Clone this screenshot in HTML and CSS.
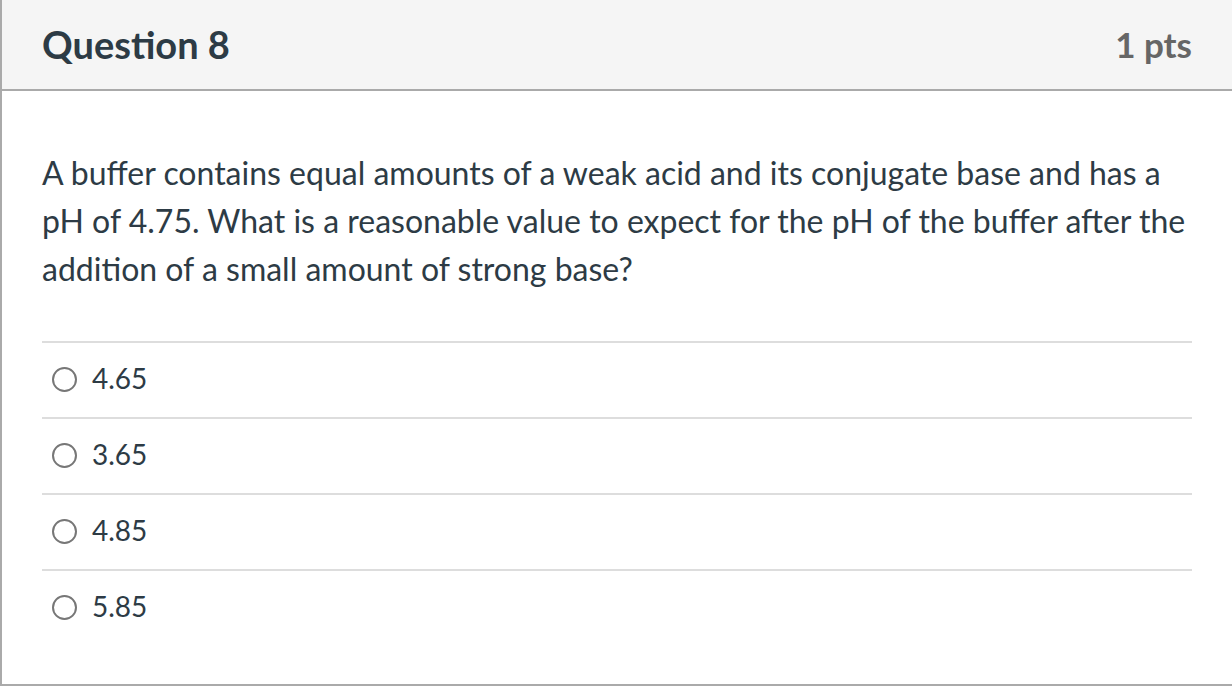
FILE: index.html
```html
<!DOCTYPE html>
<html lang="en">
<head>
<meta charset="utf-8">
<title>Question 8</title>
<link rel="stylesheet" href="styles.css">
</head>
<body>
<div class="question">
  <div class="q-header">
    <h2 class="q-title">Question 8</h2>
    <div class="q-points">1 pts</div>
  </div>
  <div class="q-body">
    <p class="q-text">A buffer contains equal amounts of a weak acid and its conjugate base and has a pH of 4.75. What is a reasonable value to expect for the pH of the buffer after the addition of a small amount of strong base?</p>
    <div class="answers">
      <label class="answer"><span class="radio"></span><span class="answer-text">4.65</span></label>
      <label class="answer"><span class="radio"></span><span class="answer-text">3.65</span></label>
      <label class="answer"><span class="radio"></span><span class="answer-text">4.85</span></label>
      <label class="answer"><span class="radio"></span><span class="answer-text">5.85</span></label>
    </div>
  </div>
</div>
</body>
</html>
```

FILE: styles.css
```css
html, body {
  margin: 0;
  padding: 0;
  background: #ffffff;
}
body {
  font-family: Lato, "Liberation Sans", sans-serif;
  color: #2d3b45;
  width: 1232px;
  height: 686px;
  overflow: hidden;
}
.question {
  border-left: 2px solid #aaaaaa;
  border-bottom: 2px solid #aaaaaa;
  box-sizing: border-box;
  height: 686px;
}
.q-header {
  box-sizing: border-box;
  background: #f5f5f5;
  border-bottom: 2px solid #aaaaaa;
  display: flex;
  align-items: center;
  justify-content: space-between;
  padding: 0 40px 0 40px;
  height: 91px;
}
.q-title {
  margin: 0;
  font-size: 38px;
  font-weight: 700;
  color: #2d3b45;
  position: relative;
  top: -1px;
}
.q-points {
  font-size: 35px;
  font-weight: 700;
  color: #666666;
  position: relative;
  top: -1px;
}
.q-body {
  padding: 58px 40px 0 40px;
}
.q-text {
  margin: 0;
  font-size: 32px;
  line-height: 48px;
}
.answers {
  margin-top: 48px;
}
.answer {
  display: flex;
  align-items: center;
  height: 76px;
  box-sizing: border-box;
  border-top: 2px solid #dddddd;
  padding-left: 10px;
}
.radio {
  width: 21px;
  height: 21px;
  border: 2px solid #777777;
  border-radius: 50%;
  flex: none;
  position: relative;
  top: -1px;
}
.answer-text {
  font-size: 28px;
  margin-left: 15px;
  position: relative;
  top: -2px;
}
```
